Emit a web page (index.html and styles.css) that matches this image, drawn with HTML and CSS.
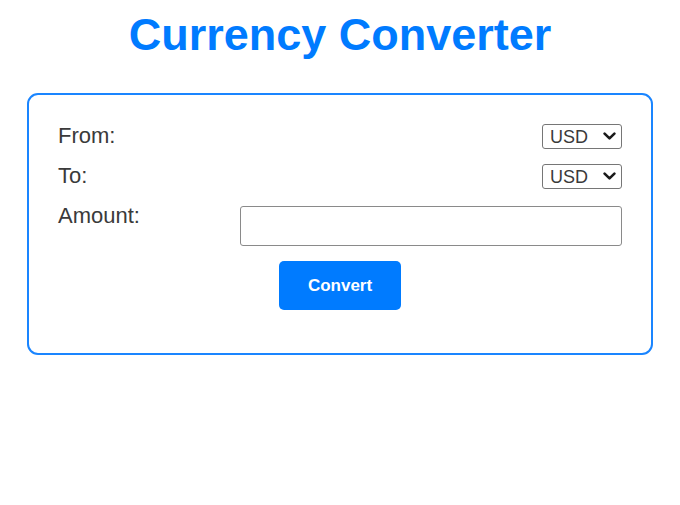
FILE: index.html
```html
<!DOCTYPE html>
<html lang="en">
<head>
<meta charset="utf-8">
<title>Currency Converter</title>
<link rel="stylesheet" href="styles.css">
</head>
<body>
<h1 class="title">Currency Converter</h1>
<div class="card">
  <div class="row">
    <label class="label" for="from">From:</label>
    <span class="select-wrap">
      <select id="from" class="select"><option>USD</option><option>EUR</option><option>GBP</option></select>
      <svg class="chevron" width="13" height="8" viewBox="0 0 13 8"><path d="M1.6 1.6 L6.5 6.4 L11.4 1.6" fill="none" stroke="#1a1a1a" stroke-width="2.6" stroke-linecap="round" stroke-linejoin="round"/></svg>
    </span>
  </div>
  <div class="row">
    <label class="label" for="to">To:</label>
    <span class="select-wrap">
      <select id="to" class="select"><option>USD</option><option>EUR</option><option>GBP</option></select>
      <svg class="chevron" width="13" height="8" viewBox="0 0 13 8"><path d="M1.6 1.6 L6.5 6.4 L11.4 1.6" fill="none" stroke="#1a1a1a" stroke-width="2.6" stroke-linecap="round" stroke-linejoin="round"/></svg>
    </span>
  </div>
  <div class="row row-amount">
    <label class="label" for="amount">Amount:</label>
    <input id="amount" class="input" type="text">
  </div>
  <div class="actions">
    <button class="button" type="button">Convert</button>
  </div>
</div>
</body>
</html>
```
FILE: styles.css
```css
html, body {
  margin: 0;
  padding: 0;
  background: #ffffff;
  font-family: "Liberation Sans", Arial, sans-serif;
}

.title {
  margin: 9px 0 32px;
  text-align: center;
  color: #007bff;
  font-size: 45px;
  font-weight: bold;
  line-height: normal;
}

.card {
  box-sizing: border-box;
  width: 626px;
  margin: 0 auto;
  padding: 27px 29px 43px;
  border: 2px solid #1a85ff;
  border-radius: 11px;
}

.row {
  display: flex;
  justify-content: space-between;
  align-items: flex-start;
  margin-bottom: 13px;
}

.row-amount {
  margin-bottom: 15px;
}

.label {
  padding-top: 1px;
  font-size: 22px;
  line-height: 26px;
  color: #3a3a3a;
}

.select-wrap {
  position: relative;
  display: inline-block;
  margin-top: 2px;
}

.select {
  -webkit-appearance: none;
  appearance: none;
  display: block;
  box-sizing: border-box;
  width: 80px;
  height: 25px;
  margin: 0;
  padding: 0 0 0 7px;
  border: 1px solid #767676;
  border-radius: 3px;
  background: #ffffff;
  font-family: "Liberation Sans", Arial, sans-serif;
  font-size: 18px;
  color: #3a3a3a;
}

.chevron {
  position: absolute;
  right: 6px;
  top: 8px;
  pointer-events: none;
}

.input {
  box-sizing: border-box;
  width: 382px;
  height: 40px;
  margin: 4px 0 0;
  padding: 0 8px;
  border: 1px solid #8a8a8a;
  border-radius: 3px;
  font-family: "Liberation Sans", Arial, sans-serif;
  font-size: 18px;
}

.actions {
  display: flex;
  justify-content: center;
}

.button {
  width: 122px;
  height: 49px;
  padding: 0;
  border: none;
  border-radius: 5px;
  background: #007bff;
  color: #ffffff;
  font-family: "Liberation Sans", Arial, sans-serif;
  font-size: 17px;
  font-weight: bold;
  cursor: pointer;
}
```
